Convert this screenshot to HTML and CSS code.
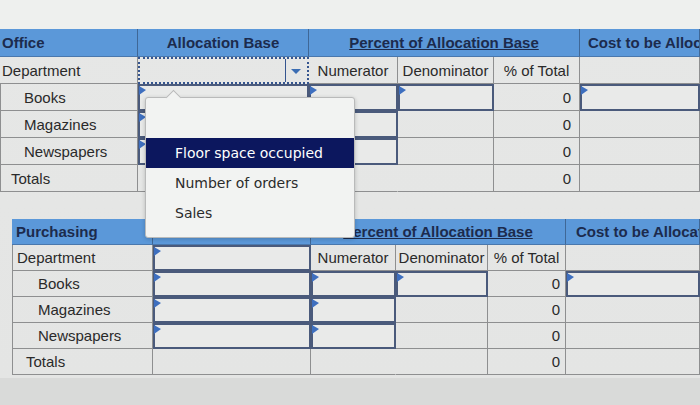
FILE: index.html
```html
<!DOCTYPE html>
<html lang="en">
<head>
    <meta charset="UTF-8">
    <meta name="viewport" content="width=device-width, initial-scale=1.0">
    <title>Cost Allocation</title>
    <link rel="stylesheet" href="styles.css">
</head>
<body>
    <div class="screen">

        <!-- Office department -->
        <div class="sheet sheet-office">
            <div class="row head">
                <div class="cell lbl">Office</div>
                <div class="cell center">Allocation Base</div>
                <div class="cell center span3"><u>Percent of Allocation Base</u></div>
                <div class="cell clip">Cost to be Allocated</div>
            </div>
            <div class="row">
                <div class="cell lbl">Department</div>
                <div class="cell focus">
                    <span class="select-split"></span>
                    <span class="select-arrow"></span>
                </div>
                <div class="cell center">Numerator</div>
                <div class="cell center">Denominator</div>
                <div class="cell center">% of Total</div>
                <div class="cell"></div>
            </div>
            <div class="row">
                <div class="cell lbl item">Books</div>
                <div class="cell inp"></div>
                <div class="cell inp"></div>
                <div class="cell inp"></div>
                <div class="cell num">0</div>
                <div class="cell inp"></div>
            </div>
            <div class="row">
                <div class="cell lbl item">Magazines</div>
                <div class="cell inp"></div>
                <div class="cell inp"></div>
                <div class="cell"></div>
                <div class="cell num">0</div>
                <div class="cell"></div>
            </div>
            <div class="row">
                <div class="cell lbl item">Newspapers</div>
                <div class="cell inp"></div>
                <div class="cell inp"></div>
                <div class="cell"></div>
                <div class="cell num">0</div>
                <div class="cell"></div>
            </div>
            <div class="row">
                <div class="cell lbl total">Totals</div>
                <div class="cell"></div>
                <div class="cell open"></div>
                <div class="cell"></div>
                <div class="cell num">0</div>
                <div class="cell"></div>
            </div>

            <!-- open dropdown of the focused select -->
            <div class="menu">
                <div class="opt sel">Floor space occupied</div>
                <div class="opt">Number of orders</div>
                <div class="opt">Sales</div>
            </div>
        </div>

        <!-- Purchasing department -->
        <div class="sheet sheet-purch">
            <div class="row head">
                <div class="cell lbl">Purchasing</div>
                <div class="cell"></div>
                <div class="cell center span3"><u>Percent of Allocation Base</u></div>
                <div class="cell clip">Cost to be Allocated</div>
            </div>
            <div class="row">
                <div class="cell lbl">Department</div>
                <div class="cell inp"></div>
                <div class="cell center">Numerator</div>
                <div class="cell center">Denominator</div>
                <div class="cell center">% of Total</div>
                <div class="cell"></div>
            </div>
            <div class="row">
                <div class="cell lbl item">Books</div>
                <div class="cell inp"></div>
                <div class="cell inp"></div>
                <div class="cell inp"></div>
                <div class="cell num">0</div>
                <div class="cell inp"></div>
            </div>
            <div class="row">
                <div class="cell lbl item">Magazines</div>
                <div class="cell inp"></div>
                <div class="cell inp"></div>
                <div class="cell"></div>
                <div class="cell num">0</div>
                <div class="cell"></div>
            </div>
            <div class="row">
                <div class="cell lbl item">Newspapers</div>
                <div class="cell inp"></div>
                <div class="cell inp"></div>
                <div class="cell"></div>
                <div class="cell num">0</div>
                <div class="cell"></div>
            </div>
            <div class="row">
                <div class="cell lbl total">Totals</div>
                <div class="cell"></div>
                <div class="cell open"></div>
                <div class="cell"></div>
                <div class="cell num">0</div>
                <div class="cell"></div>
            </div>
        </div>

    </div>
</body>
</html>
```

FILE: styles.css
```css
body {
    margin: 0;
    background-color: #dcdddc;
    font-family: "Liberation Sans", Arial, sans-serif;
    font-size: 15px;
    color: #2a2a2a;
}

.screen {
    width: 700px;
    height: 405px;
    overflow: hidden;
    background: linear-gradient(#eef0ee 0, #eef0ee 29px, #e6e7e6 29px, #e4e5e4 378px, #d9dad9 378px);
    padding-top: 29px;
    box-sizing: border-box;
}

.sheet {
    position: relative;
}

.sheet-purch {
    margin-top: 27px;
    margin-left: 12px;
}

.row {
    display: grid;
    height: 27px;
}

.sheet-office .row {
    grid-template-columns: 138px 171px 89px 96px 86px 120px;
}

.sheet-purch .row {
    grid-template-columns: 141px 158px 85px 92px 78px 134px;
    height: 26px;
}

.row.head {
    height: 28px;
    background-color: #5b98d9;
    font-weight: bold;
    color: #1c2b4d;
}

.sheet-purch .row.head {
    height: 26px;
}

.cell {
    display: flex;
    align-items: center;
    box-sizing: border-box;
    border-right: 1px solid #8e8f90;
    border-bottom: 1px solid #8e8f90;
    white-space: nowrap;
    min-width: 0;
}

.head .cell {
    border-right: 1px solid #3f6796;
    border-bottom: 1px solid #4a78ad;
}

.center {
    justify-content: center;
}

.span3 {
    grid-column: span 3;
}

.clip {
    overflow: hidden;
    padding-left: 8px;
}

.sheet-purch .clip {
    padding-left: 10px;
}

.lbl {
    padding-left: 2px;
}

.sheet-purch .lbl {
    padding-left: 4px;
    border-left: 1px solid #8e8f90;
}

.sheet-purch .head .lbl {
    border-left: none;
}

.lbl.item {
    padding-left: 23px;
    border-left: 1px solid #8e8f90;
}

.sheet-purch .lbl.item {
    padding-left: 25px;
}

.lbl.total {
    padding-left: 10px;
    border-left: 1px solid #8e8f90;
}

.sheet-purch .lbl.total {
    padding-left: 13px;
}

.num {
    justify-content: flex-end;
    padding-right: 8px;
}

.sheet-purch .num {
    padding-right: 5px;
}

.open {
    border-right-color: transparent;
}

/* input cells: dark frame with a small blue flag */
.inp {
    position: relative;
    border: 2px solid #4a5a7b;
    background-color: #e9eae9;
}

.inp::before {
    content: "";
    position: absolute;
    left: -1px;
    top: 0;
    border-left: 7px solid #3e6fbf;
    border-top: 4px solid transparent;
    border-bottom: 5px solid transparent;
}

/* focused select */
.focus {
    position: relative;
    border: 2px dotted #35558f;
}

.select-split {
    position: absolute;
    right: 21px;
    top: 0;
    bottom: 0;
    border-left: 1px solid #35558f;
}

.select-arrow {
    position: absolute;
    right: 6px;
    top: 10px;
    border-top: 5px solid #3b6db3;
    border-left: 5px solid transparent;
    border-right: 5px solid transparent;
}

/* dropdown list */
.menu {
    position: absolute;
    left: 145px;
    top: 68px;
    width: 210px;
    z-index: 10;
    box-sizing: border-box;
    padding: 40px 0 9px;
    background-color: #f2f3f2;
    border: 1px solid #b9baba;
    border-radius: 3px;
    box-shadow: 0 1px 4px rgba(0, 0, 0, 0.2);
    font-family: "DejaVu Sans", Verdana, sans-serif;
    font-size: 14px;
    color: #2b2b2b;
}

.menu::before {
    content: "";
    position: absolute;
    left: 22px;
    top: -6px;
    width: 10px;
    height: 10px;
    background-color: #f2f3f2;
    border-top: 1px solid #b9baba;
    border-left: 1px solid #b9baba;
    transform: rotate(45deg);
}

.opt {
    height: 30px;
    line-height: 30px;
    padding-left: 29px;
}

.opt.sel {
    background-color: #0c175e;
    color: #ffffff;
}
```
